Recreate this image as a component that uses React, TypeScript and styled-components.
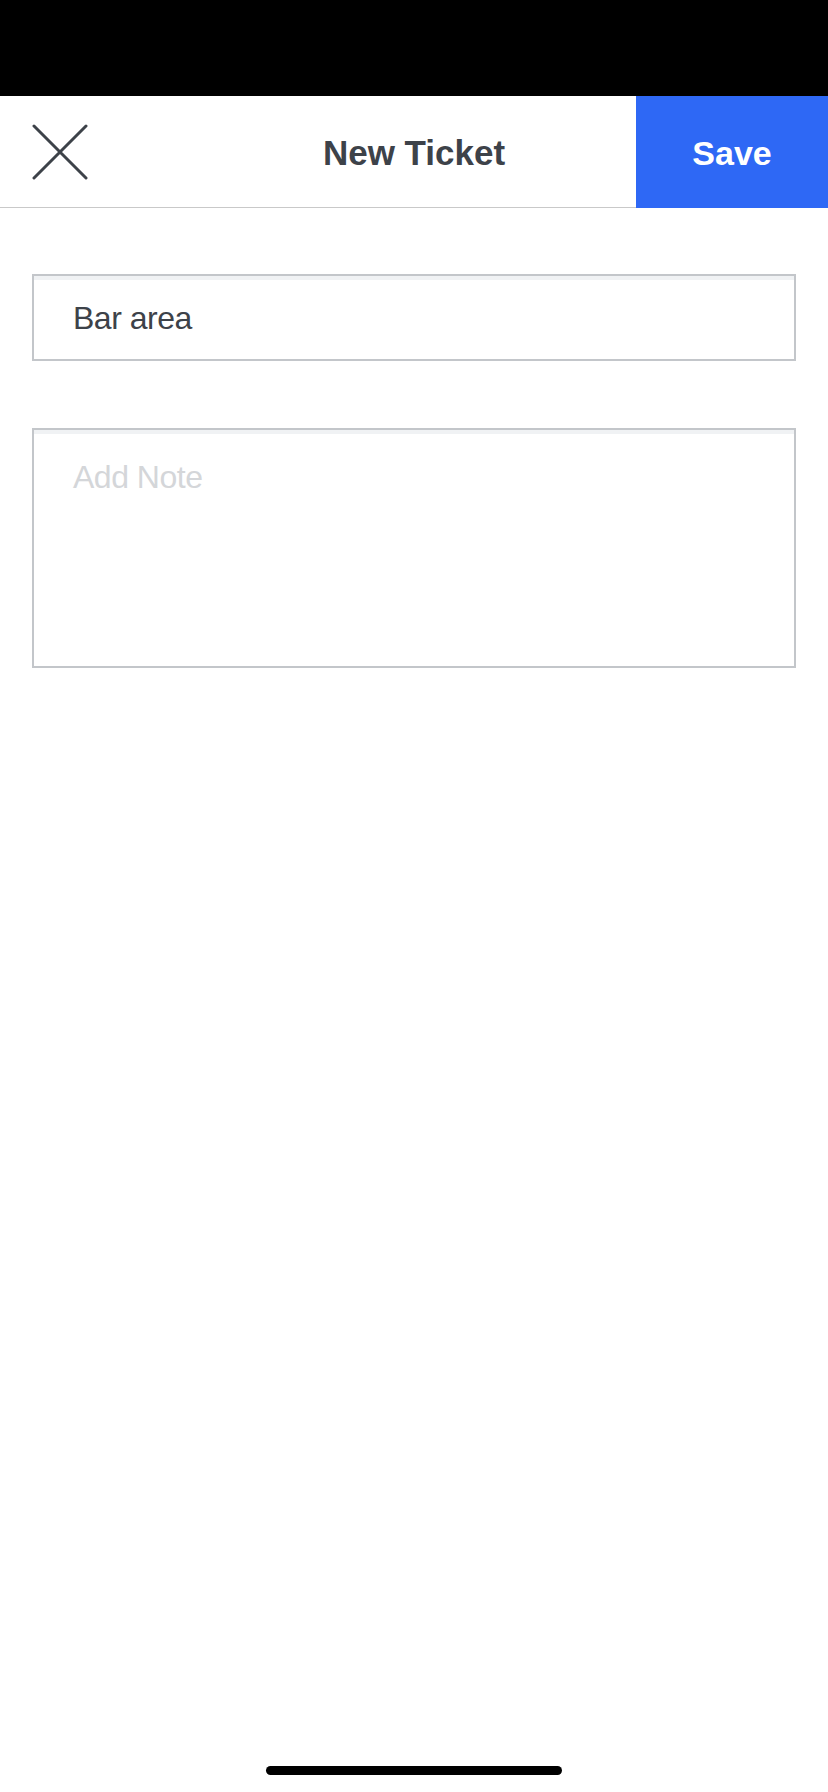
import React from 'react';
import styled, { createGlobalStyle } from 'styled-components';

const GlobalStyle = createGlobalStyle`
	html, body {
		margin: 0;
		padding: 0;
		background: #ffffff;
	}
	* {
		box-sizing: border-box;
	}
`

const Screen = styled.div`
	display: flex;
	flex-direction: column;
	width: 828px;
	min-height: 1792px;
	background: #ffffff;
	font-family: "Liberation Sans", Arial, sans-serif;
	color: #3d4249;
`

const StatusBar = styled.div`
	height: 96px;
	background: #000000;
`

const Header = styled.header`
	display: grid;
	grid-template-columns: 192px 1fr 192px;
	align-items: center;
	height: 112px;
	border-bottom: 1px solid #c9c9c9;
`

const CloseButton = styled.button`
	display: flex;
	align-items: center;
	justify-content: flex-start;
	height: 100%;
	padding: 0 0 0 32px;
	border: none;
	background: none;
	cursor: pointer;
`

const Title = styled.h1`
	margin: 0;
	padding-top: 3px;
	text-align: center;
	font-size: 35px;
	font-weight: 700;
	color: #3d4249;
`

const SaveButton = styled.button`
	align-self: stretch;
	height: 112px;
	margin-bottom: -1px;
	padding: 3px 0 0;
	border: none;
	background: #2e68f5;
	color: #ffffff;
	font-family: inherit;
	font-size: 34px;
	font-weight: 700;
	cursor: pointer;
`

const Form = styled.div`
	display: flex;
	flex-direction: column;
	gap: 67px;
	padding: 66px 32px 0;
`

const Field = styled.div<{ tall?: boolean }>`
	display: flex;
	align-items: ${p => (p.tall ? 'flex-start' : 'center')};
	height: ${p => (p.tall ? '240px' : '87px')};
	padding: ${p => (p.tall ? '27px 39px 0' : '0 39px')};
	border: 2px solid #c3c6ca;
	box-shadow: inset 0 4px 0 #f0f2f4;
	background: #ffffff;
`

const FieldText = styled.span<{ placeholder?: boolean }>`
	font-size: 32px;
	line-height: 40px;
	letter-spacing: -0.5px;
	color: ${p => (p.placeholder ? '#d4d6d9' : '#3d4249')};
`

const Spacer = styled.div`
	flex: 1;
`

const HomeArea = styled.div`
	display: flex;
	justify-content: center;
	padding-bottom: 17px;
`

const HomeIndicator = styled.div`
	width: 296px;
	height: 9px;
	border-radius: 5px;
	background: #000000;
`

function CloseIcon() {
	return (
		<svg width="56" height="56" viewBox="0 0 56 56" fill="none">
			<path d="M2 2L54 54M54 2L2 54" stroke="#3d4249" strokeWidth="3" strokeLinecap="round" />
		</svg>
	);
}

function App() {
	return (
		<>
			<GlobalStyle />
			<Screen>
				<StatusBar />
				<Header>
					<CloseButton aria-label="Close">
						<CloseIcon />
					</CloseButton>
					<Title>New Ticket</Title>
					<SaveButton>Save</SaveButton>
				</Header>
				<Form>
					<Field>
						<FieldText>Bar area</FieldText>
					</Field>
					<Field tall>
						<FieldText placeholder>Add Note</FieldText>
					</Field>
				</Form>
				<Spacer />
				<HomeArea>
					<HomeIndicator />
				</HomeArea>
			</Screen>
		</>
	);
}

export default App;
